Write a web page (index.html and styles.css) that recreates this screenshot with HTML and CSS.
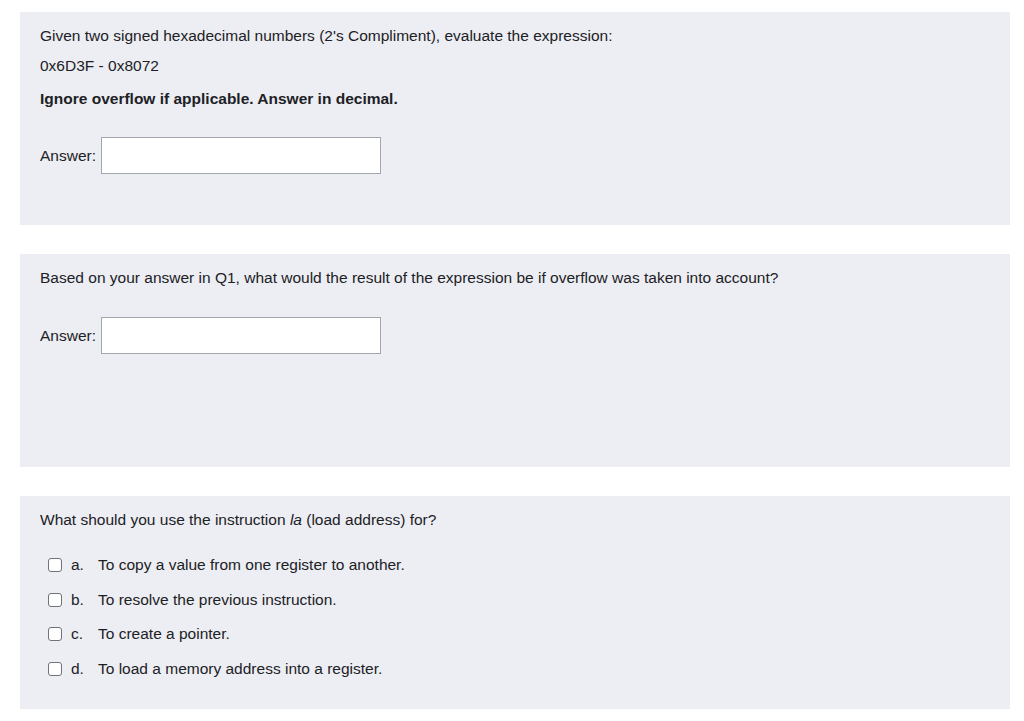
FILE: index.html
```html
<!DOCTYPE html>
<html>
<head>
<meta charset="utf-8">
<link rel="stylesheet" href="styles.css">
</head>
<body>
<div class="page">
  <div class="card">
    <p class="line">Given two signed hexadecimal numbers (2's Compliment), evaluate the expression:</p>
    <p class="line l2">0x6D3F - 0x8072</p>
    <p class="line l3 bold">Ignore overflow if applicable. Answer in decimal.</p>
    <div class="answer a1">
      <label class="alabel">Answer:</label>
      <input class="ainput" type="text">
    </div>
  </div>
  <div class="card">
    <p class="line">Based on your answer in Q1, what would the result of the expression be if overflow was taken into account?</p>
    <div class="answer a2">
      <label class="alabel">Answer:</label>
      <input class="ainput" type="text">
    </div>
  </div>
  <div class="card c3">
    <p class="line">What should you use the instruction <em>la</em> (load address) for?</p>
    <div class="options">
      <div class="opt"><span class="box"></span><span class="letter">a.</span><span class="otext">To copy a value from one register to another.</span></div>
      <div class="opt"><span class="box"></span><span class="letter">b.</span><span class="otext">To resolve the previous instruction.</span></div>
      <div class="opt"><span class="box"></span><span class="letter">c.</span><span class="otext">To create a pointer.</span></div>
      <div class="opt"><span class="box"></span><span class="letter">d.</span><span class="otext">To load a memory address into a register.</span></div>
    </div>
  </div>
</div>
</body>
</html>
```
FILE: styles.css
```css
html, body {
  margin: 0;
  padding: 0;
  background: #ffffff;
}
body {
  font-family: "Liberation Sans", Arial, Helvetica, sans-serif;
  font-size: 15.5px;
  color: #1d2125;
}
.page {
  padding: 12px 14px 0 20px;
  display: flex;
  flex-direction: column;
  gap: 29px;
}
.card {
  background: #eceef3;
  height: 213px;
  box-sizing: border-box;
  padding: 14px 20px;
}
.line {
  margin: 0;
  line-height: 20px;
}
.l2 { margin-top: 10px; }
.l3 { margin-top: 13px; }
.bold { font-weight: bold; }
.answer {
  display: flex;
  align-items: center;
  gap: 5px;
}
.a1 { margin-top: 28px; }
.a2 { margin-top: 29px; }
.ainput {
  width: 280px;
  height: 37px;
  box-sizing: border-box;
  border: 1px solid #a3a6ab;
  background: #fff;
  margin: 0;
  padding: 0 8px;
  border-radius: 0;
  outline: none;
}
.options {
  margin-top: 25px;
  display: flex;
  flex-direction: column;
  gap: 14.5px;
}
.opt {
  display: flex;
  align-items: center;
  line-height: 20px;
  padding-left: 8px;
}
.box {
  width: 12px;
  height: 12px;
  border: 1px solid #6f7277;
  border-radius: 3px;
  background: #fff;
  margin-right: 9px;
}
.letter {
  width: 27px;
}
```
